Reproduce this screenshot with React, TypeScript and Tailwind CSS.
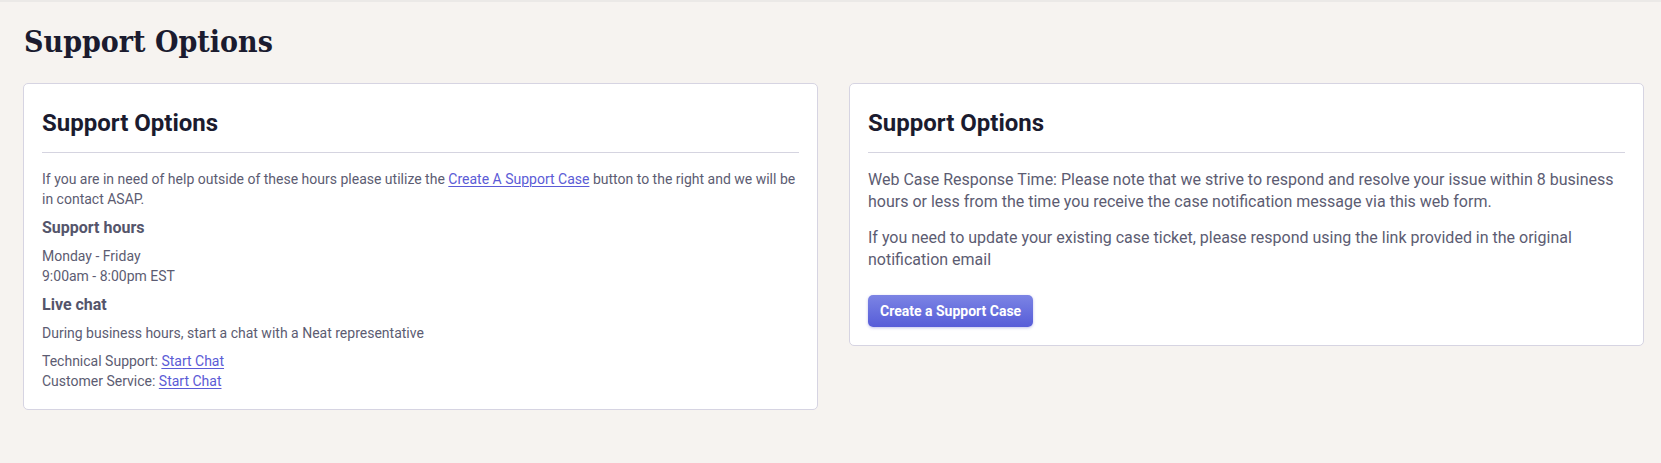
const linkCls = "text-[#5b5bd6] underline underline-offset-2 decoration-1";

const SupportCard = ({ children }: { children: React.ReactNode }) => (
  <div className="bg-white border border-[#d6d4e2] rounded-[5px] px-[18px] pt-[23px] pb-[18px]">
    <h2 className="text-[24px] leading-[32px] font-bold text-[#1b1b2f]">Support Options</h2>
    <hr className="mt-[13px] mb-[16px] border-0 border-t border-[#d5d4e0]" />
    {children}
  </div>
);

export default function App() {
  return (
    <div
      className="min-h-screen bg-[#f6f3f0] border-t-2 border-[#ebe9e7] text-[#5c5c72]"
      style={{ fontFamily: "Roboto, 'Noto Sans', sans-serif" }}
    >
      <div className="pl-[23px] pr-[17px] pt-[18px]">
        {/* Page title */}
        <h1
          className="text-[30px] leading-[44px] font-bold text-[#1b1b2f] ml-px"
          style={{ fontFamily: "'DejaVu Serif Condensed', 'DejaVu Serif', serif" }}
        >
          Support Options
        </h1>

        <div className="grid grid-cols-2 gap-[31px] items-start mt-[19px]">
          {/* Hours & live chat */}
          <SupportCard>
            <p className="text-[14px] leading-[20px]">
              If you are in need of help outside of these hours please utilize the{" "}
              <a href="#" className={linkCls}>
                Create A Support Case
              </a>{" "}
              button to the right and we will be in contact ASAP.
            </p>
            <h3 className="mt-[7px] text-[16px] leading-[24px] font-bold text-[#55556b]">Support hours</h3>
            <p className="mt-[6px] text-[14px] leading-[20px]">
              Monday - Friday
              <br />
              9:00am - 8:00pm EST
            </p>
            <h3 className="mt-[7px] text-[16px] leading-[24px] font-bold text-[#55556b]">Live chat</h3>
            <p className="mt-[6px] text-[14px] leading-[20px]">
              During business hours, start a chat with a Neat representative
            </p>
            <p className="mt-[8px] text-[14px] leading-[20px]">
              Technical Support:{" "}
              <a href="#" className={linkCls}>
                Start Chat
              </a>
              <br />
              Customer Service:{" "}
              <a href="#" className={linkCls}>
                Start Chat
              </a>
            </p>
          </SupportCard>

          {/* Web case */}
          <SupportCard>
            <p className="text-[16px] leading-[22px]">
              Web Case Response Time: Please note that we strive to respond and resolve your issue within 8
              business hours or less from the time you receive the case notification message via this web form.
            </p>
            <p className="mt-[14px] text-[16px] leading-[22px]">
              If you need to update your existing case ticket, please respond using the link provided in the
              original notification email
            </p>
            <button className="mt-[24px] h-[32px] px-[12px] rounded-[5px] bg-gradient-to-b from-[#7c84e4] to-[#575cd8] text-white text-[14px] font-bold shadow-[0_1px_3px_rgba(80,80,200,0.35)]">
              Create a Support Case
            </button>
          </SupportCard>
        </div>
      </div>
    </div>
  );
}
